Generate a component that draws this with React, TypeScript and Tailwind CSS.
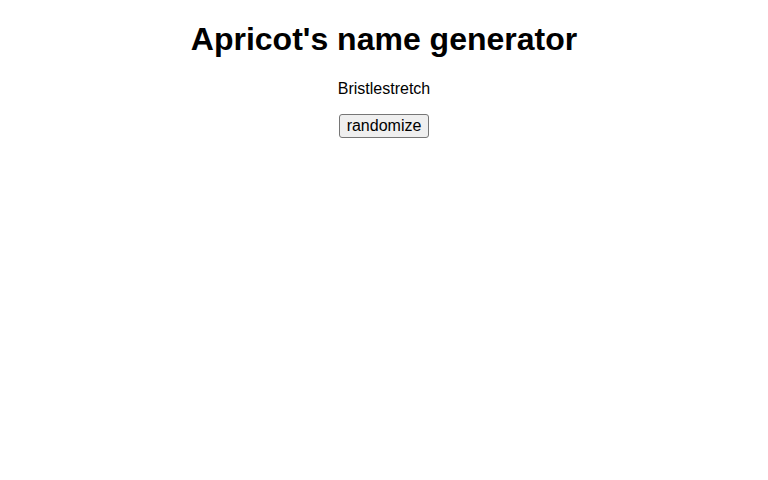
import React, { useState } from "react";

const names = ["Bristlestretch", "Fuzzlewhisk", "Pebbletoes", "Mossbeard", "Thistlepaw"];

export default function App() {
  const [name, setName] = useState<string>(names[0]);

  function randomize() {
    setName(names[Math.floor(Math.random() * names.length)]);
  }

  return (
    <div className="text-center text-black bg-white font-['Liberation_Sans',Arial,sans-serif] text-[16px]">
      <h1 className="text-[32px] font-bold leading-[normal] pt-[21.44px] pb-[21.44px]">
        Apricot's name generator
      </h1>
      <p className="leading-[normal] mb-4">{name}</p>
      <button
        onClick={randomize}
        className="bg-[#efefef] hover:bg-[#e5e5e5] border border-[#767676] rounded-[3px] px-[7px] py-[2px] leading-[normal] text-black"
      >
        randomize
      </button>
    </div>
  );
}
